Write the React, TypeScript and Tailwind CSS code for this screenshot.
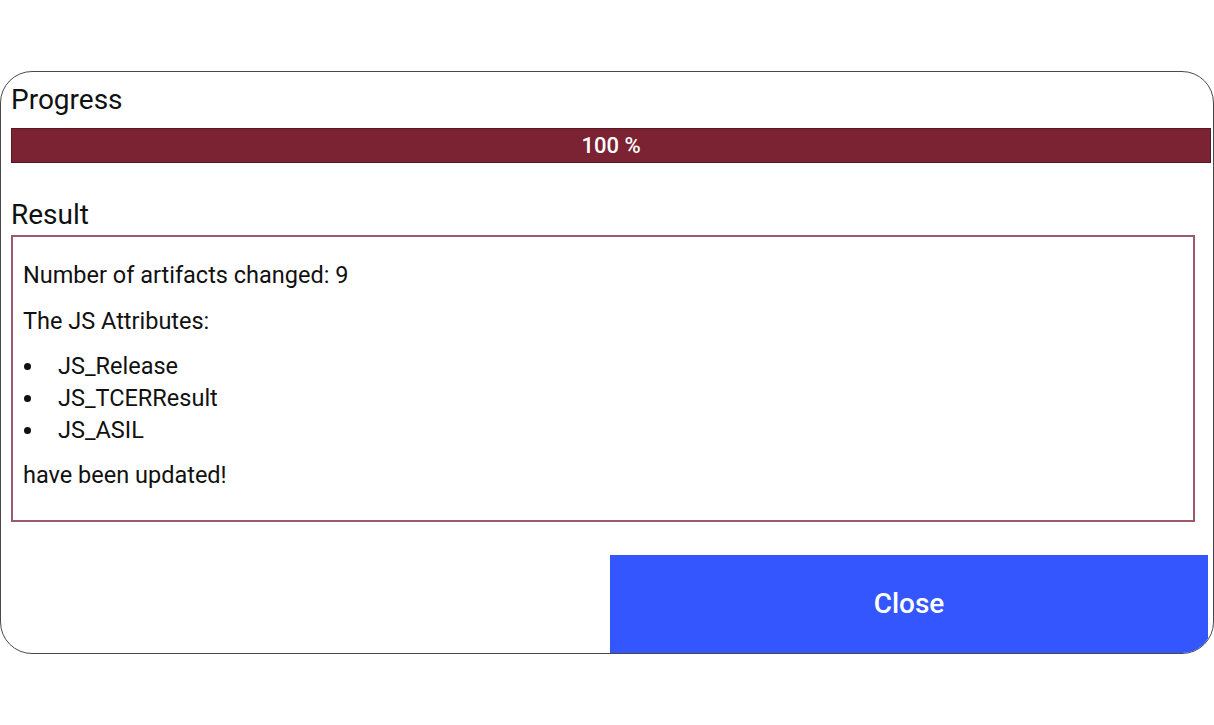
export default function App() {
  const attributes = ["JS_Release", "JS_TCERResult", "JS_ASIL"];

  return (
    <div className="h-[725px] w-[1214px] bg-white pt-[71px] font-['Roboto',sans-serif] text-[#111]">
      <div className="flex h-[583px] w-[1214px] flex-col overflow-hidden rounded-[32px] border border-[#4a4a4a] bg-white">
        <div className="pl-[10px] pt-[12px]">
          <h2 className="text-[28px] leading-[32px]">Progress</h2>

          <div className="mt-[12px] flex h-[35px] w-[1200px] items-center justify-center border border-[#5c1523] bg-[#7b2233]">
            <span className="text-[22px] font-medium leading-none text-white">100 %</span>
          </div>

          <h2 className="mt-[36px] text-[28px] leading-[32px]">Result</h2>

          <div className="mt-[4px] h-[287px] w-[1184px] border-2 border-[#9c5a69] pl-[10px] pt-[22px] text-[23.5px] leading-[32px]">
            <p>Number of artifacts changed: 9</p>
            <p className="mt-[14px]">The JS Attributes:</p>
            <ul className="mt-[13px]">
              {attributes.map((a) => (
                <li key={a} className="flex items-center">
                  <span className="w-[35px] pl-[1px]">
                    <span className="block h-[7px] w-[7px] rounded-full bg-[#111]" />
                  </span>
                  <span>{a}</span>
                </li>
              ))}
            </ul>
            <p className="mt-[13px]">have been updated!</p>
          </div>
        </div>

        <div className="mt-[33px] flex flex-1 justify-end pr-[5px]">
          <button className="flex w-[598px] items-center justify-center bg-[#3456fe] text-[28px] font-medium text-white">
            Close
          </button>
        </div>
      </div>
    </div>
  );
}
